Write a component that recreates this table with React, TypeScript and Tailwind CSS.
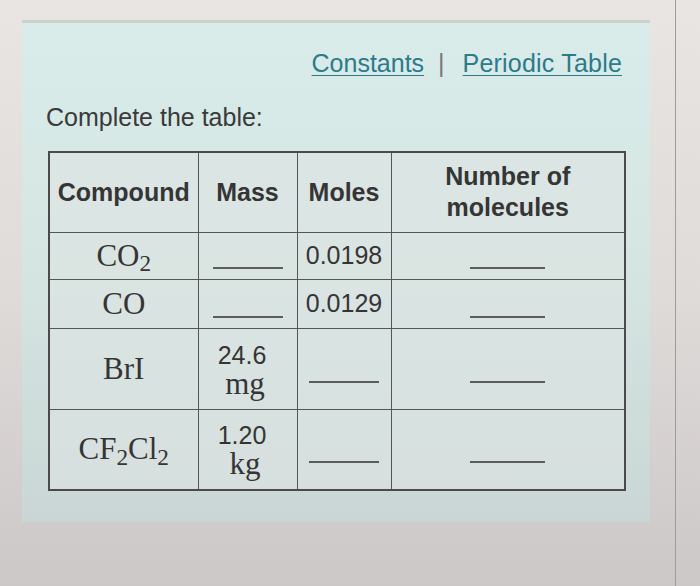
const rows = [
  { name: <>CO<sub>2</sub></>, mass: null, moles: '0.0198', h: 'h-[47px]' },
  { name: <>CO</>, mass: null, moles: '0.0129', h: 'h-[49px]' },
  { name: <>BrI</>, mass: ['24.6', 'mg'], moles: null, h: 'h-[81px]' },
  { name: <>CF<sub>2</sub>Cl<sub>2</sub></>, mass: ['1.20', 'kg'], moles: null, h: 'h-[80px]' },
]

function Blank({ w = 'w-[70px]' }: { w?: string }) {
  return <div className={`mx-auto h-[27px] ${w} border-b-2 border-[#5c5c5c]`} />
}

const cell = 'border border-[#555] p-0 text-center align-middle'

export default function App() {
  return (
    <div className="flex h-[586px] w-[700px] bg-linear-to-b from-[#e8e5e2] via-[#dfdbd9] to-[#cdc8c8] font-['Liberation_Sans',Arial,sans-serif] text-[#353535]">
      <div className="w-[675px] pl-[22px] pt-[20px]">
        <div className="h-[502px] w-[628px] border-t-[3px] border-[#cdd0cc] bg-linear-to-b from-[#d9ece9] via-[#d5e5e2] to-[#c9d6d5]">
          <div className="flex justify-end pr-[28px] pt-[26px] text-[25px] leading-[29px]">
            <a href="#" className="text-[#2c7a8b] underline decoration-1 underline-offset-[3px]">
              Constants
            </a>
            <span className="ml-[14px] mr-[18px] text-[#777]">|</span>
            <a href="#" className="tracking-[0.2px] text-[#2c7a8b] underline decoration-1 underline-offset-[3px]">
              Periodic Table
            </a>
          </div>

          <p className="mt-[25px] pl-[24px] text-[25px] leading-[29px] text-[#3a3a3a]">Complete the table:</p>

          <table className="ml-[26px] mt-[19px] w-[576px] table-fixed border-collapse border-2 border-[#4a4a4a] bg-[#dde5e3]/60">
            <colgroup>
              <col className="w-[149px]" />
              <col className="w-[99px]" />
              <col className="w-[94px]" />
              <col className="w-[234px]" />
            </colgroup>
            <thead>
              <tr className="h-[80px] text-[25px] font-bold">
                <th className={cell}>Compound</th>
                <th className={cell}>Mass</th>
                <th className={cell}>Moles</th>
                <th className={`${cell} leading-[31px]`}>
                  Number of
                  <br />
                  molecules
                </th>
              </tr>
            </thead>
            <tbody>
              {rows.map((r, i) => (
                <tr key={i} className={r.h}>
                  <td className={`${cell} font-['Liberation_Serif',serif] text-[31px]`}>{r.name}</td>
                  <td className={cell}>
                    {r.mass ? (
                      <div className="pr-[5px] leading-[32px]">
                        <div className="pr-[6px] text-[25px]">{r.mass[0]}</div>
                        <div className="-mt-[3px] font-['Liberation_Serif',serif] text-[31px]">{r.mass[1]}</div>
                      </div>
                    ) : (
                      <Blank />
                    )}
                  </td>
                  <td className={cell}>
                    {r.moles ? <span className="text-[25px]">{r.moles}</span> : <Blank />}
                  </td>
                  <td className={cell}>
                    <Blank w="w-[75px]" />
                  </td>
                </tr>
              ))}
            </tbody>
          </table>
        </div>
      </div>
      <div className="flex-1 border-l border-[#9d9b9b]" />
    </div>
  )
}
